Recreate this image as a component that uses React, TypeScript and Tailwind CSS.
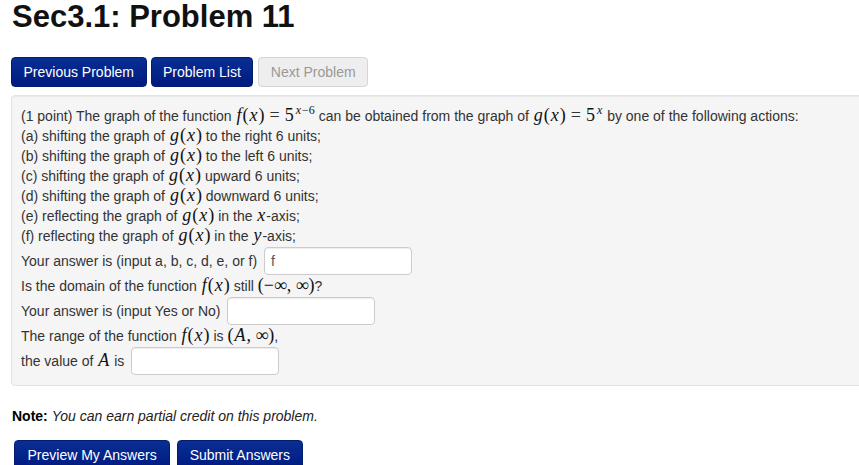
import React from 'react';

// math pieces, rendered in a serif face like MathJax output
const M: React.FC<{ children: React.ReactNode }> = ({ children }) => (
  <span className="font-['Liberation_Serif',serif] text-[18px] leading-[14px] text-[#111]">{children}</span>
);

const V: React.FC<{ children: React.ReactNode }> = ({ children }) => <span className="px-[1px] italic">{children}</span>;

const Eq = () => <span className="mx-[5px] text-[#333]">=</span>;

const Sup: React.FC<{ children: React.ReactNode }> = ({ children }) => (
  <span className="ml-[1px] align-[7px] text-[12px] leading-[4px]">{children}</span>
);

const Fx = () => (
  <M>
    <V>f</V>(<V>x</V>)
  </M>
);

const Gx = () => (
  <M>
    <V>g</V>(<V>x</V>)
  </M>
);

const AnswerBox: React.FC<{ value?: string }> = ({ value = '' }) => (
  <input
    readOnly
    value={value}
    className="ml-[7px] h-[28px] w-[148px] rounded-[4px] border border-[#cccccc] bg-white px-[6px] text-[14px] text-[#555] shadow-[inset_0_1px_1px_rgba(0,0,0,0.075)] outline-none"
  />
);

const NavButton: React.FC<{ label: string; disabled?: boolean; pad?: string }> = ({ label, disabled, pad = 'px-[11.5px]' }) =>
  disabled ? (
    <button className={`h-[30px] rounded-[4px] border border-[#d6d6d6] bg-[#eeeeee] text-[14px] text-[#999] ${pad}`}>
      {label}
    </button>
  ) : (
    <button
      className={`h-[30px] rounded-[4px] border border-[#00206e] bg-gradient-to-b from-[#0a2e94] to-[#001a80] text-[14px] text-white ${pad}`}
    >
      {label}
    </button>
  );

const actions = [
  ['(a)', 'to the right 6 units;'],
  ['(b)', 'to the left 6 units;'],
  ['(c)', 'upward 6 units;'],
  ['(d)', 'downward 6 units;'],
];

const Line: React.FC<{ children: React.ReactNode }> = ({ children }) => <div className="h-[20px]">{children}</div>;

export default function App() {
  return (
    <div className="h-[465px] w-[859px] overflow-hidden bg-white font-['Liberation_Sans',Arial,sans-serif] text-[14px] text-[#333]">
      <h1 className="ml-[12px] text-[31px] font-bold leading-[34px] text-[#111]">Sec3.1: Problem 11</h1>

      <div className="ml-[11px] mt-[23px] flex gap-[4px]">
        <NavButton label="Previous Problem" />
        <NavButton label="Problem List" />
        <div className="ml-[1px]">
          <NavButton label="Next Problem" disabled />
        </div>
      </div>

      <div className="ml-[11px] mt-[8px] w-[870px] rounded-[4px] border border-[#e3e3e3] bg-[#f5f5f5] pb-[9px] pl-[9px] pt-[10px] leading-[20px] shadow-[inset_0_1px_1px_rgba(0,0,0,0.05)]">
        <Line>
          (1 point) The graph of the function <Fx />
          <M>
            <Eq />5
            <Sup>
              <V>x</V>−6
            </Sup>
          </M>{' '}
          can be obtained from the graph of <Gx />
          <M>
            <Eq />5
            <Sup>
              <V>x</V>
            </Sup>
          </M>{' '}
          by one of the following actions:
        </Line>
        {actions.map(([tag, rest]) => (
          <Line key={tag}>
            {tag} shifting the graph of <Gx /> {rest}
          </Line>
        ))}
        <Line>
          (e) reflecting the graph of <Gx /> in the{' '}
          <M>
            <V>x</V>
          </M>
          -axis;
        </Line>
        <Line>
          (f) reflecting the graph of <Gx /> in the{' '}
          <M>
            <V>y</V>
          </M>
          -axis;
        </Line>

        <div className="flex h-[30px] items-center">
          <span>Your answer is (input a, b, c, d, e, or f)</span>
          <AnswerBox value="f" />
        </div>
        <Line>
          Is the domain of the function <Fx /> still <M>(−∞, ∞)</M>?
        </Line>
        <div className="flex h-[30px] items-center">
          <span>Your answer is (input Yes or No)</span>
          <AnswerBox />
        </div>
        <Line>
          The range of the function <Fx /> is{' '}
          <M>
            (<V>A</V>, ∞)
          </M>
          ,
        </Line>
        <div className="flex h-[30px] items-center">
          <span>
            the value of{' '}
            <M>
              <V>A</V>
            </M>{' '}
            is
          </span>
          <AnswerBox />
        </div>
      </div>

      <p className="ml-[12px] mt-[20px] leading-[20px] text-[#222]">
        <span className="font-bold text-black">Note:</span> <i>You can earn partial credit on this problem.</i>
      </p>

      <div className="ml-[14px] mt-[14px] flex gap-[7px]">
        <NavButton label="Preview My Answers" pad="px-[12.5px]" />
        <NavButton label="Submit Answers" pad="px-[11.5px]" />
      </div>
    </div>
  );
}
